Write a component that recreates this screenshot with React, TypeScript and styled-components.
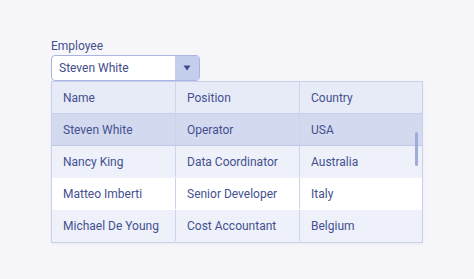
import React from 'react';
import styled, { createGlobalStyle } from 'styled-components';

const GlobalStyle = createGlobalStyle`
  html, body {
    margin: 0;
    padding: 0;
    background: #f7f7fb;
    font-family: Roboto, "Liberation Sans", sans-serif;
  }
`;

const rows = [
  { name: 'Steven White', position: 'Operator', country: 'USA' },
  { name: 'Nancy King', position: 'Data Coordinator', country: 'Australia' },
  { name: 'Matteo Imberti', position: 'Senior Developer', country: 'Italy' },
  { name: 'Michael De Young', position: 'Cost Accountant', country: 'Belgium' },
];

const rowColors = ['#d3daf0', '#eef0fa', '#ffffff', '#eef0fa'];

const App: React.FC = () => {
  return (
    <Page>
      <GlobalStyle />
      <Field>
        <Label>Employee</Label>
        <Select>
          <SelectValue>Steven White</SelectValue>
          <SelectButton>
            <svg width="8" height="6" viewBox="0 0 8 6">
              <path d="M0.5 0.5 L7.5 0.5 L4 5.5 Z" fill="#3a4a8c" />
            </svg>
          </SelectButton>
        </Select>
      </Field>
      <Table>
        <HeaderRow>
          <Cell>Name</Cell>
          <Cell>Position</Cell>
          <Cell>Country</Cell>
        </HeaderRow>
        <Body>
          {rows.map((r, i) => (
            <Row key={r.name} $bg={rowColors[i]} $selected={i === 0}>
              <Cell>{r.name}</Cell>
              <Cell>{r.position}</Cell>
              <Cell>{r.country}</Cell>
            </Row>
          ))}
          <Scrollbar />
        </Body>
      </Table>
    </Page>
  );
};

export default App;

const Page = styled.div`
  width: 474px;
  height: 279px;
  box-sizing: border-box;
  padding: 39px 0 0 51px;
  color: #44508f;
`;

const Field = styled.div`
  display: flex;
  flex-direction: column;
  gap: 2px;
`;

const Label = styled.div`
  font-size: 12px;
  line-height: 14px;
  color: #44508f;
`;

const Select = styled.div`
  display: flex;
  width: 149px;
  height: 26px;
  box-sizing: border-box;
  border: 1px solid #a8b5e0;
  border-radius: 4px;
  background: #ffffff;
  overflow: hidden;
`;

const SelectValue = styled.div`
  flex: 1;
  display: flex;
  align-items: center;
  padding-left: 7px;
  font-size: 12px;
  color: #3f4c8c;
`;

const SelectButton = styled.div`
  width: 24px;
  display: flex;
  align-items: center;
  justify-content: center;
  background: #c4cfee;
`;

const Table = styled.div`
  width: 372px;
  box-sizing: border-box;
  border: 1px solid #c9d0eb;
  box-shadow: 0 1px 3px rgba(60, 70, 140, 0.08);
`;

const HeaderRow = styled.div`
  display: grid;
  grid-template-columns: 124px 124px 1fr;
  height: 31px;
  background: #e7ebf7;
  border-bottom: 1px solid #c9d0eb;
`;

const Body = styled.div`
  position: relative;
`;

const Row = styled.div<{ $bg: string; $selected: boolean }>`
  display: grid;
  grid-template-columns: 124px 124px 1fr;
  height: 32px;
  box-sizing: border-box;
  background: ${(p) => p.$bg};
  border-bottom: 1px solid ${(p) => (p.$selected ? '#bfc8e6' : 'transparent')};
  &:last-child {
    border-bottom: none;
  }
`;

const Cell = styled.div`
  display: flex;
  align-items: center;
  padding-left: 11px;
  font-size: 12px;
  color: #44508f;
  border-right: 1px solid #cdd3ec;
  &:last-child {
    border-right: none;
  }
`;

const Scrollbar = styled.div`
  position: absolute;
  top: 18px;
  right: 4px;
  width: 3px;
  height: 34px;
  border-radius: 2px;
  background: #9eabdb;
`;
